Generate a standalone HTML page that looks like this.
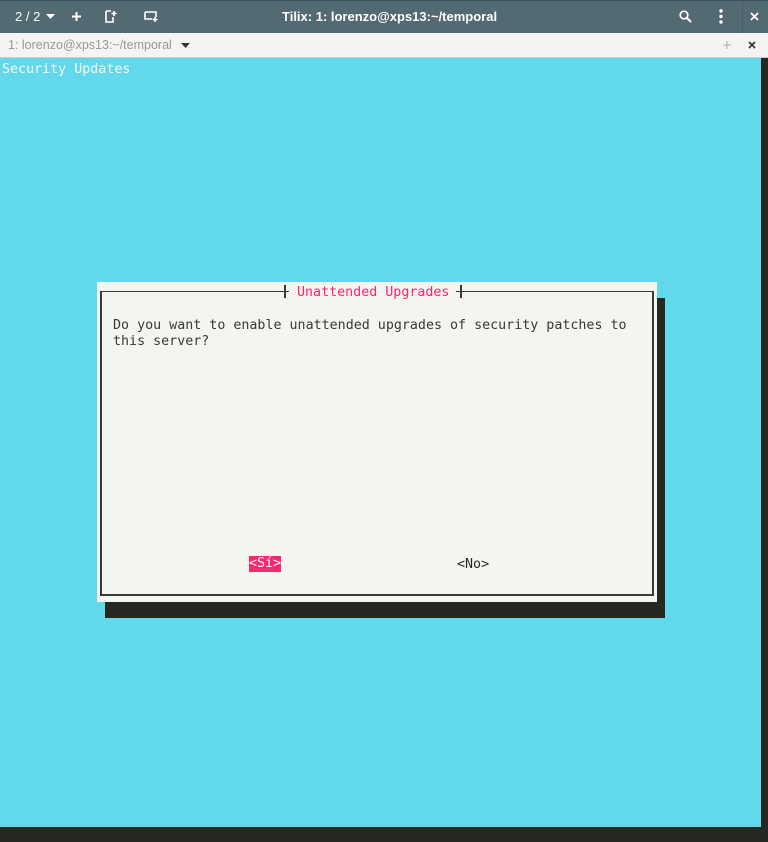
<!DOCTYPE html>
<html><head><meta charset="utf-8"><style>
*{margin:0;padding:0;box-sizing:border-box}
body{width:768px;height:842px;background:#272822;position:relative;overflow:hidden;font-family:"Liberation Sans",sans-serif}
.tb{position:absolute;left:0;top:0;width:768px;height:33px;background:#546a73;color:#fff;border-top:1px solid #3e5058}
.tb span{position:absolute;top:8px;font-size:13px}
.tabs{position:absolute;left:0;top:33px;width:768px;height:25px;background:#f4f4f4;border-bottom:1px solid #ccc}
.term{position:absolute;left:0;top:58px;width:761px;height:769px;background:#62d8ec}
.mono{font-family:"DejaVu Sans Mono","Liberation Mono",monospace;font-size:13.33px;line-height:16px;white-space:pre;position:absolute}
</style></head><body>
<div class="tb">
<span style="left:15px;font-size:13px">2 / 2</span>
<svg style="position:absolute;left:46px;top:13px" width="9" height="6"><path d="M0 0H9L4.5 5Z" fill="#fff"/></svg>
<svg style="position:absolute;left:71px;top:10px" width="11" height="11"><path d="M5.5 1V10M1 5.5H10" stroke="#fff" stroke-width="2"/></svg>
<svg style="position:absolute;left:105px;top:9px" width="12" height="13"><path d="M1 1H6M1 1V12H8V7M9 1V6M6.5 3.5H11.5" stroke="#fff" stroke-width="1.6" fill="none"/></svg>
<svg style="position:absolute;left:144px;top:10px" width="14" height="11"><path d="M1 1H12V6M1 1V8H8M11 6V11M8.5 8.5H13.5" stroke="#fff" stroke-width="1.6" fill="none"/></svg>
<span style="left:282px;font-weight:bold;font-size:13px">Tilix: 1: lorenzo@xps13:~/temporal</span>
<svg style="position:absolute;left:679px;top:9px" width="13" height="13"><circle cx="5" cy="5" r="3.8" stroke="#fff" stroke-width="1.7" fill="none"/><path d="M8 8L12 12" stroke="#fff" stroke-width="2"/></svg>
<svg style="position:absolute;left:719px;top:8px" width="4" height="15"><circle cx="2" cy="2" r="1.7" fill="#fff"/><circle cx="2" cy="7.5" r="1.7" fill="#fff"/><circle cx="2" cy="13" r="1.7" fill="#fff"/></svg>
<div style="position:absolute;left:742px;top:0;width:1px;height:32px;background:#4a5d65"></div>
<svg style="position:absolute;left:750px;top:11px" width="9" height="9"><path d="M1 1L8 8M8 1L1 8" stroke="#fff" stroke-width="1.8"/></svg>
</div>
<div class="tabs">
<span style="position:absolute;left:8px;top:5px;font-size:12.5px;color:#999">1: lorenzo@xps13:~/temporal</span>
<svg style="position:absolute;left:181px;top:10px" width="9" height="6"><path d="M0 0H9L4.5 5Z" fill="#333"/></svg>
<svg style="position:absolute;left:723px;top:8px" width="8" height="8"><path d="M4 0V8M0 4H8" stroke="#aaa" stroke-width="1"/></svg>
<svg style="position:absolute;left:748px;top:8px" width="8" height="8"><path d="M1 1L7 7M7 1L1 7" stroke="#333" stroke-width="1.6"/></svg>
</div>
<div class="term">
<div class="mono" style="left:2px;top:4px;color:#f8f8f2">Security Updates</div>
<div style="position:absolute;left:105px;top:240px;width:560px;height:320px;background:#272822"></div>
<div style="position:absolute;left:97px;top:224px;width:560px;height:320px;background:#f5f5ef"></div>
<div style="position:absolute;left:100px;top:233px;width:554px;height:305px;border:2px solid #3a3a35;border-top-width:1.5px"></div>
<div style="position:absolute;left:284px;top:227px;width:2px;height:13px;background:#3a3a35"></div>
<div style="position:absolute;left:460px;top:227px;width:2px;height:13px;background:#3a3a35"></div>
<div class="mono" style="left:289px;top:227px;background:#f5f5ef;color:#f92672;padding:0 7px 0 8px">Unattended Upgrades</div>
<div class="mono" style="left:113px;top:260px;color:#3a3a35">Do you want to enable unattended upgrades of security patches to
this server?</div>
<div class="mono" style="left:249px;top:498px;background:#f92672;color:#f8f8f2">&lt;Sí&gt;</div>
<div class="mono" style="left:457px;top:499px;color:#272822">&lt;No&gt;</div>
</div>
</body></html>
